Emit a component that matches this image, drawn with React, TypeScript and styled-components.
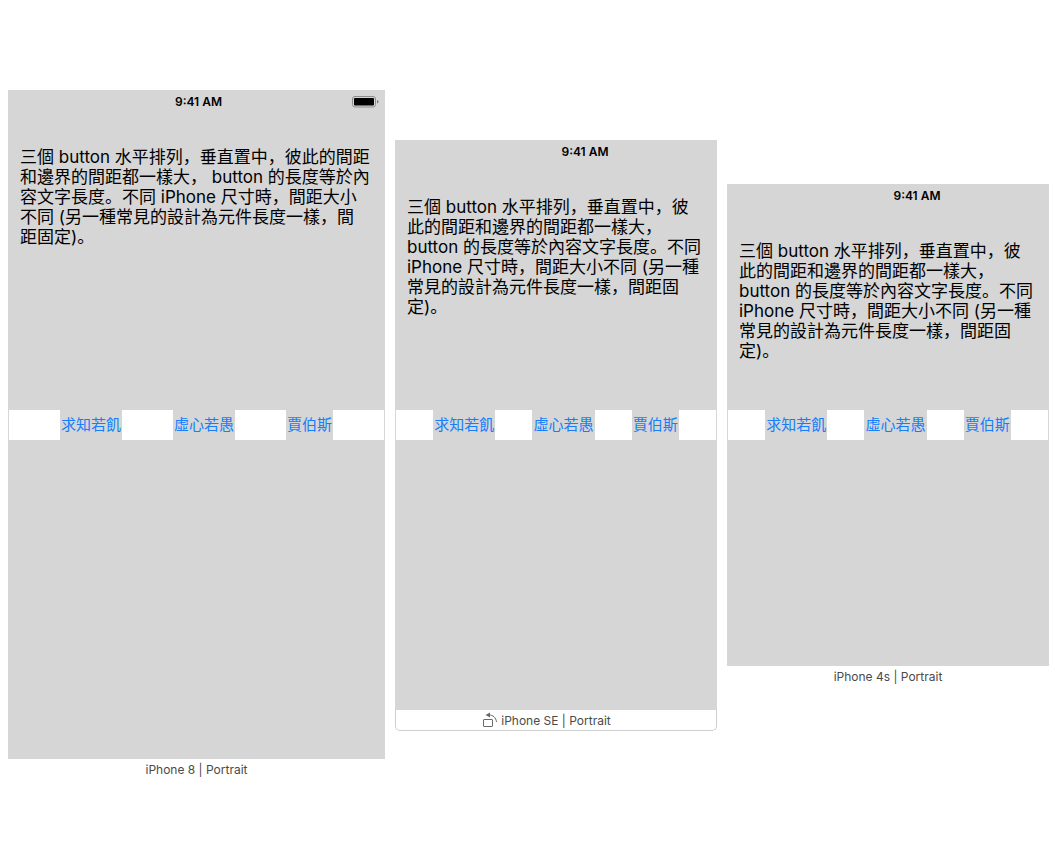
import React from 'react';
import styled, { createGlobalStyle } from 'styled-components';

const GlobalStyle = createGlobalStyle`
  *, *::before, *::after { box-sizing: border-box; }
  body {
    margin: 0;
    background: #ffffff;
    font-family: Inter, 'Noto Sans CJK SC', sans-serif;
  }
`;

const Canvas = styled.main`
  display: grid;
  grid-template-columns: 377fr 322fr 322fr;
  gap: 10px;
  align-items: center;
  min-height: 100vh;
  padding: 19px 9px 0 8px;
`;

const Device = styled.figure`
  min-width: 0;
  margin: 0;
`;

const Screen = styled.div<{ $ratio: string }>`
  display: grid;
  grid-template-rows: 1fr auto 1fr;
  aspect-ratio: ${({ $ratio }) => $ratio};
  background: #d6d6d6;
`;

const StatusBar = styled.div<{ $shifted: boolean }>`
  display: grid;
  grid-template-columns: 1fr auto 1fr;
  align-items: center;
  height: 24px;
  padding-right: 6px;
  padding-left: ${({ $shifted }) => ($shifted ? '64px' : '10px')};
`;

const Time = styled.time`
  grid-column: 2;
  color: #000000;
  font-size: 12px;
  font-weight: 600;
  line-height: 16px;
`;

const BatteryIcon = styled.svg`
  display: block;
  justify-self: end;
`;

const Description = styled.p`
  margin: 33px 0 0;
  padding: 0 10px 0 12px;
  color: #000000;
  font-size: 17px;
  line-height: 20px;
`;

const Line = styled.span`
  display: block;
  white-space: nowrap;
`;

const ButtonRow = styled.div`
  display: flex;
  gap: 1px;
  height: 30px;
  padding: 0 1px;
`;

const Spacer = styled.span`
  flex: 1;
  background: #ffffff;
`;

const TextButton = styled.button`
  padding: 0;
  border: 0;
  background: transparent;
  color: #147efb;
  font-family: inherit;
  font-size: 15px;
  line-height: 30px;
  white-space: nowrap;
`;

const Caption = styled.figcaption<{ $selected: boolean }>`
  display: grid;
  grid-template-columns: 1fr auto 1fr;
  align-items: center;
  gap: 4px;
  height: 21px;
  border: solid ${({ $selected }) => ($selected ? '#cfcfcf' : 'transparent')};
  border-width: 0 1px 1px;
  border-radius: 0 0 5px 5px;
  color: #4a4a4a;
  font-size: 12px;
  line-height: 20px;
`;

const CaptionText = styled.span`
  grid-column: 2;
  padding-top: 1px;
`;

const RotateButton = styled.button`
  justify-self: end;
  padding: 0;
  border: 0;
  background: transparent;
  color: #6a6a6a;
`;

const RotateIcon = styled.svg`
  display: block;
`;

interface DeviceSpec {
  name: string;
  ratio: string;
  battery: boolean;
  selected: boolean;
  lines: string[];
}

const compactLines = [
  '三個 button 水平排列，垂直置中，彼',
  '此的間距和邊界的間距都一樣大，',
  'button 的長度等於內容文字長度。不同',
  'iPhone 尺寸時，間距大小不同 (另一種',
  '常見的設計為元件長度一樣，間距固',
  '定)。',
];

const devices: DeviceSpec[] = [
  {
    name: 'iPhone 8',
    ratio: '377 / 669',
    battery: true,
    selected: false,
    lines: [
      '三個 button 水平排列，垂直置中，彼此的間距',
      '和邊界的間距都一樣大， button 的長度等於內',
      '容文字長度。不同 iPhone 尺寸時，間距大小',
      '不同 (另一種常見的設計為元件長度一樣，間',
      '距固定)。',
    ],
  },
  { name: 'iPhone SE', ratio: '322 / 570', battery: false, selected: true, lines: compactLines },
  { name: 'iPhone 4s', ratio: '322 / 482', battery: false, selected: false, lines: compactLines },
];

const labels = ['求知若飢', '虛心若愚', '賈伯斯'];

function Battery() {
  return (
    <BatteryIcon width="27" height="12" viewBox="0 0 27 12" role="img" aria-label="Battery full">
      <rect x="0.5" y="0.5" width="23" height="10.5" rx="2.5" fill="none" stroke="#8c8c8c" />
      <rect x="2" y="2" width="20" height="7.5" rx="1" fill="#000000" />
      <path d="M25 4 Q26.5 4.5 26.5 5.75 Q26.5 7 25 7.5 Z" fill="#777777" />
    </BatteryIcon>
  );
}

function Rotate() {
  return (
    <RotateIcon width="15" height="16" viewBox="0 0 15 16" fill="none" stroke="currentColor" aria-hidden="true">
      <rect x="1.5" y="7.5" width="9" height="7" rx="0.5" />
      <path d="M7 3 C11 3 14 5.5 14.5 10" />
      <path d="M3.5 3 L8 0.5 V5.5 Z" fill="currentColor" stroke="none" />
    </RotateIcon>
  );
}

function DevicePreview({ name, ratio, battery, selected, lines }: DeviceSpec) {
  return (
    <Device>
      <Screen $ratio={ratio}>
        <div>
          <StatusBar $shifted={!battery}>
            <Time>9:41 AM</Time>
            {battery && <Battery />}
          </StatusBar>
          <Description>
            {lines.map((line) => (
              <Line key={line}>{line}</Line>
            ))}
          </Description>
        </div>
        <ButtonRow>
          <Spacer />
          {labels.map((label) => (
            <React.Fragment key={label}>
              <TextButton type="button">{label}</TextButton>
              <Spacer />
            </React.Fragment>
          ))}
        </ButtonRow>
      </Screen>
      <Caption $selected={selected}>
        {selected && (
          <RotateButton type="button" aria-label="Rotate device">
            <Rotate />
          </RotateButton>
        )}
        <CaptionText>{name} | Portrait</CaptionText>
      </Caption>
    </Device>
  );
}

export default function App() {
  return (
    <>
      <GlobalStyle />
      <Canvas>
        {devices.map((device) => (
          <DevicePreview key={device.name} {...device} />
        ))}
      </Canvas>
    </>
  );
}
